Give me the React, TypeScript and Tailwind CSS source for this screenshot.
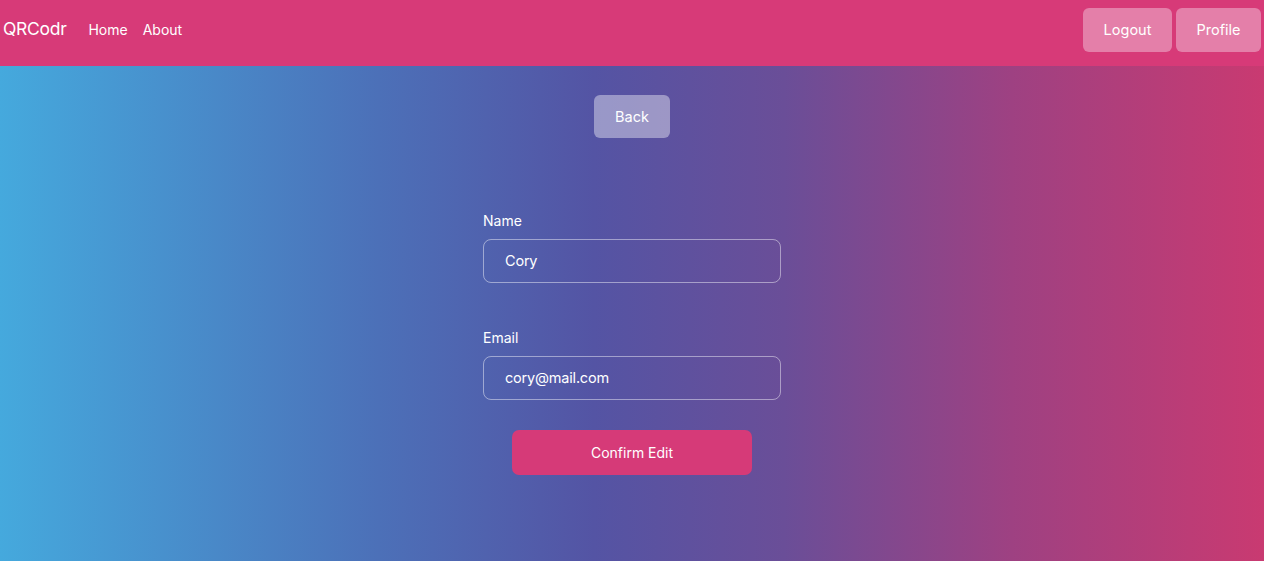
import React from "react";

export default function App() {
  return (
    <div className="min-h-[561px] w-full flex flex-col font-['Inter',sans-serif] text-white">
      <nav className="h-[66px] bg-[#d73a78] flex items-start justify-between pl-[3px] pr-[3px]">
        <div className="flex items-center h-[59px]">
          <span className="text-[17.5px] tracking-[-0.3px] mr-[22px]">QRCodr</span>
          <span className="text-[14px] mr-[15px]">Home</span>
          <span className="text-[14px]">About</span>
        </div>
        <div className="flex items-center gap-[4px] pt-[8px]">
          <button className="w-[89px] h-[44px] rounded-[6px] bg-[#e47fa9] text-[14.5px]">Logout</button>
          <button className="w-[85px] h-[44px] rounded-[6px] bg-[#e47fa9] text-[14.5px]">Profile</button>
        </div>
      </nav>
      <main className="flex-1 h-[495px] bg-[linear-gradient(90deg,#45a9dd_0%,#4c70b8_30%,#5454a4_47%,#6a4e98_62%,#9e4182_80%,#c93a71_100%)] flex flex-col items-center">
        <button className="mt-[29px] w-[76px] h-[43px] rounded-[6px] bg-white/40 text-[14.5px]">Back</button>
        <div className="mt-[74px] w-[298px] flex flex-col">
          <label className="text-[14px] leading-[18px]">Name</label>
          <div className="mt-[9px] h-[44px] rounded-[8px] border border-white/45 flex items-center pl-[21px] text-[14.5px] tracking-[-0.2px]">Cory</div>
          <label className="mt-[46px] text-[14px] leading-[18px]">Email</label>
          <div className="mt-[9px] h-[44px] rounded-[8px] border border-white/45 flex items-center pl-[21px] text-[14.5px] tracking-[-0.2px]">cory@mail.com</div>
          <button className="mt-[30px] self-center w-[240px] h-[45px] rounded-[7px] bg-[#d63a78] text-[14px]">Confirm Edit</button>
        </div>
      </main>
    </div>
  );
}
